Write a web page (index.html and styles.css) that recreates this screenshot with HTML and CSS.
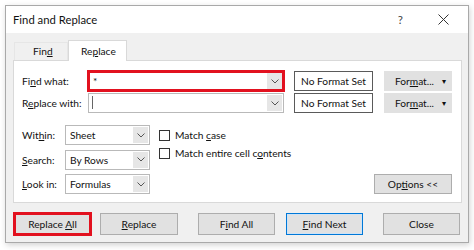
FILE: index.html
```html
<!DOCTYPE html>
<html>
<head>
<meta charset="utf-8">
<link rel="stylesheet" href="styles.css">
</head>
<body>
<div class="dialog">
  <div class="titlebar">
    <span class="title">Find and Replace</span>
    <span class="help">?</span>
    <span class="close-x"><svg width="11" height="11" viewBox="0 0 11 11"><path d="M0.5 0.5 L10.5 10.5 M10.5 0.5 L0.5 10.5" stroke="#333" stroke-width="1" fill="none"/></svg></span>
  </div>
  <div class="content">
    <div class="tabs">
      <div class="tab">Fin<u>d</u></div>
      <div class="tab active">Re<u>p</u>lace</div>
    </div>
    <div class="panel">
      <div class="fields">
        <label class="lbl">Fi<u>n</u>d what:</label>
        <div class="combo marked"><span class="val">*</span><span class="drop"><svg width="8" height="5" viewBox="0 0 8 5"><path d="M0.5 0.5 L4 4 L7.5 0.5" stroke="#555" fill="none"/></svg></span></div>
        <div class="nfs">No Format Set</div>
        <div class="fmt"><span>For<u>m</u>at...</span><span class="arr">▾</span></div>

        <label class="lbl">R<u>e</u>place with:</label>
        <div class="combo"><span class="val caret"></span><span class="drop"><svg width="8" height="5" viewBox="0 0 8 5"><path d="M0.5 0.5 L4 4 L7.5 0.5" stroke="#555" fill="none"/></svg></span></div>
        <div class="nfs">No Format Set</div>
        <div class="fmt"><span>For<u>m</u>at...</span><span class="arr">▾</span></div>
      </div>
      <div class="options">
        <div class="selects">
          <label class="lbl">Wit<u>h</u>in:</label>
          <div class="select"><span class="val">Sheet</span><span class="drop"><svg width="8" height="5" viewBox="0 0 8 5"><path d="M0.5 0.5 L4 4 L7.5 0.5" stroke="#555" fill="none"/></svg></span></div>
          <label class="lbl"><u>S</u>earch:</label>
          <div class="select"><span class="val">By Rows</span><span class="drop"><svg width="8" height="5" viewBox="0 0 8 5"><path d="M0.5 0.5 L4 4 L7.5 0.5" stroke="#555" fill="none"/></svg></span></div>
          <label class="lbl"><u>L</u>ook in:</label>
          <div class="select"><span class="val">Formulas</span><span class="drop"><svg width="8" height="5" viewBox="0 0 8 5"><path d="M0.5 0.5 L4 4 L7.5 0.5" stroke="#555" fill="none"/></svg></span></div>
        </div>
        <div class="checks">
          <div class="check"><span class="box"></span><span>Match <u>c</u>ase</span></div>
          <div class="check"><span class="box"></span><span>Match entire cell c<u>o</u>ntents</span></div>
        </div>
        <div class="btn opt">Op<u>t</u>ions &lt;&lt;</div>
      </div>
    </div>
    <div class="buttons">
      <div class="btn b-ra marked">Replace <u>A</u>ll</div>
      <div class="btn b-r"><u>R</u>eplace</div>
      <div class="btn b-fa">F<u>i</u>nd All</div>
      <div class="btn b-fn default"><u>F</u>ind Next</div>
      <div class="btn b-c">Close</div>
    </div>
  </div>
</div>
</body>
</html>
```

FILE: styles.css
```css
* { box-sizing: border-box; }
html, body { margin: 0; padding: 0; }
body {
  background: #ffffff;
  width: 474px;
  height: 250px;
  overflow: hidden;
  font-family: "Lato", "Open Sans", sans-serif;
  font-size: 10.2px;
  color: #111;
}
u { text-decoration: underline; text-underline-offset: 1px; }

.dialog {
  margin: 5px 0 0 5px;
  width: 464px;
  height: 238px;
  border: 1px solid #a9a9a9;
  background: #f0f0f0;
  box-shadow: 1px 2px 6px rgba(0,0,0,0.18);
  display: flex;
  flex-direction: column;
}

.titlebar {
  height: 27px;
  background: #fff;
  display: flex;
  align-items: center;
  padding-left: 7px;
}
.title { font-size: 11.3px; flex: 1; }
.help { font-size: 11.5px; color: #444; margin-right: 35px; }
.close-x { display: flex; margin-right: 19px; }

.content {
  flex: 1;
  padding: 6px 6px 0 7px;
  display: flex;
  flex-direction: column;
}

.tabs {
  display: flex;
  align-items: flex-end;
  height: 21px;
  margin-left: 1px;
  position: relative;
  z-index: 1;
}
.tab {
  height: 18px;
  width: 54px;
  padding-left: 18px;
  line-height: 17px;
  border: 1px solid #e6e6e6;
  border-bottom: none;
  background: #f0f0f0;
}
.tab.active {
  height: 21px;
  width: 59px;
  padding-left: 12px;
  line-height: 20px;
  background: #fff;
  border-color: #d9d9d9;
  margin-bottom: -1px;
}

.panel {
  height: 143px;
  background: #fff;
  border: 1px solid #d9d9d9;
  padding: 10px 9px 7px 8px;
  display: flex;
  flex-direction: column;
}

.fields {
  display: grid;
  grid-template-columns: 66px 196px 89px 79px;
  grid-auto-rows: 20px;
  row-gap: 2px;
  align-items: center;
}
.fields .nfs { margin-left: 10px; }
.fields .fmt { margin-left: 11px; width: 68px; }

.lbl { white-space: nowrap; }

.combo, .select {
  height: 20px;
  border: 1px solid #b9b9b9;
  background: #fff;
  display: flex;
  align-items: stretch;
}
.combo .val, .select .val {
  flex: 1;
  padding-left: 4px;
  line-height: 18px;
}
.drop {
  width: 15px;
  background: #e6e6e6;
  margin: 1px;
  display: flex;
  align-items: center;
  justify-content: center;
}
.caret { position: relative; }
.caret::before {
  content: "";
  position: absolute;
  left: 3px;
  top: 2px;
  width: 1px;
  height: 13px;
  background: #666;
}

.marked { outline: 3px solid #e2111f; outline-offset: -2px; }

.nfs {
  height: 20px;
  border: 1px solid #5a5a5a;
  background: #fff;
  text-align: center;
  line-height: 18px;
  white-space: nowrap;
}
.fmt {
  height: 20px;
  border: 1px solid #e1e1e1;
  background: #e1e1e1;
  line-height: 18px;
  display: flex;
  justify-content: flex-end;
  align-items: center;
  padding-right: 5px;
  white-space: nowrap;
}
.fmt .arr { font-size: 8px; margin-left: 8px; }

.options {
  margin-top: 12px;
  flex: 1;
  display: flex;
  align-items: flex-start;
}
.selects {
  display: grid;
  grid-template-columns: 43px 85px;
  grid-auto-rows: 20px;
  row-gap: 4.5px;
  align-items: center;
}

.checks {
  margin-left: 9px;
  margin-top: 1px;
  display: flex;
  flex-direction: column;
}
.check {
  height: 18px;
  display: flex;
  align-items: center;
  white-space: nowrap;
}
.box {
  width: 11px;
  height: 11px;
  border: 1px solid #333;
  background: #fff;
  margin-right: 5px;
}

.btn {
  height: 22px;
  width: 77px;
  background: #e1e1e1;
  border: 1px solid #adadad;
  text-align: center;
  line-height: 20px;
  white-space: nowrap;
}
.opt {
  margin-left: auto;
  align-self: flex-end;
  width: 78px;
  height: 20px;
  line-height: 18px;
  margin-bottom: 1px;
}

.buttons {
  margin-top: 10px;
  display: flex;
  padding-left: 1px;
}
.b-r { margin-left: 9px; width: 78px; }
.b-fa { margin-left: 20px; }
.b-fn { margin-left: 11px; }
.b-c { margin-left: 20px; }
.default { border-color: #0078d7; box-shadow: inset 0 0 0 1px #cfe3f6; }
```
